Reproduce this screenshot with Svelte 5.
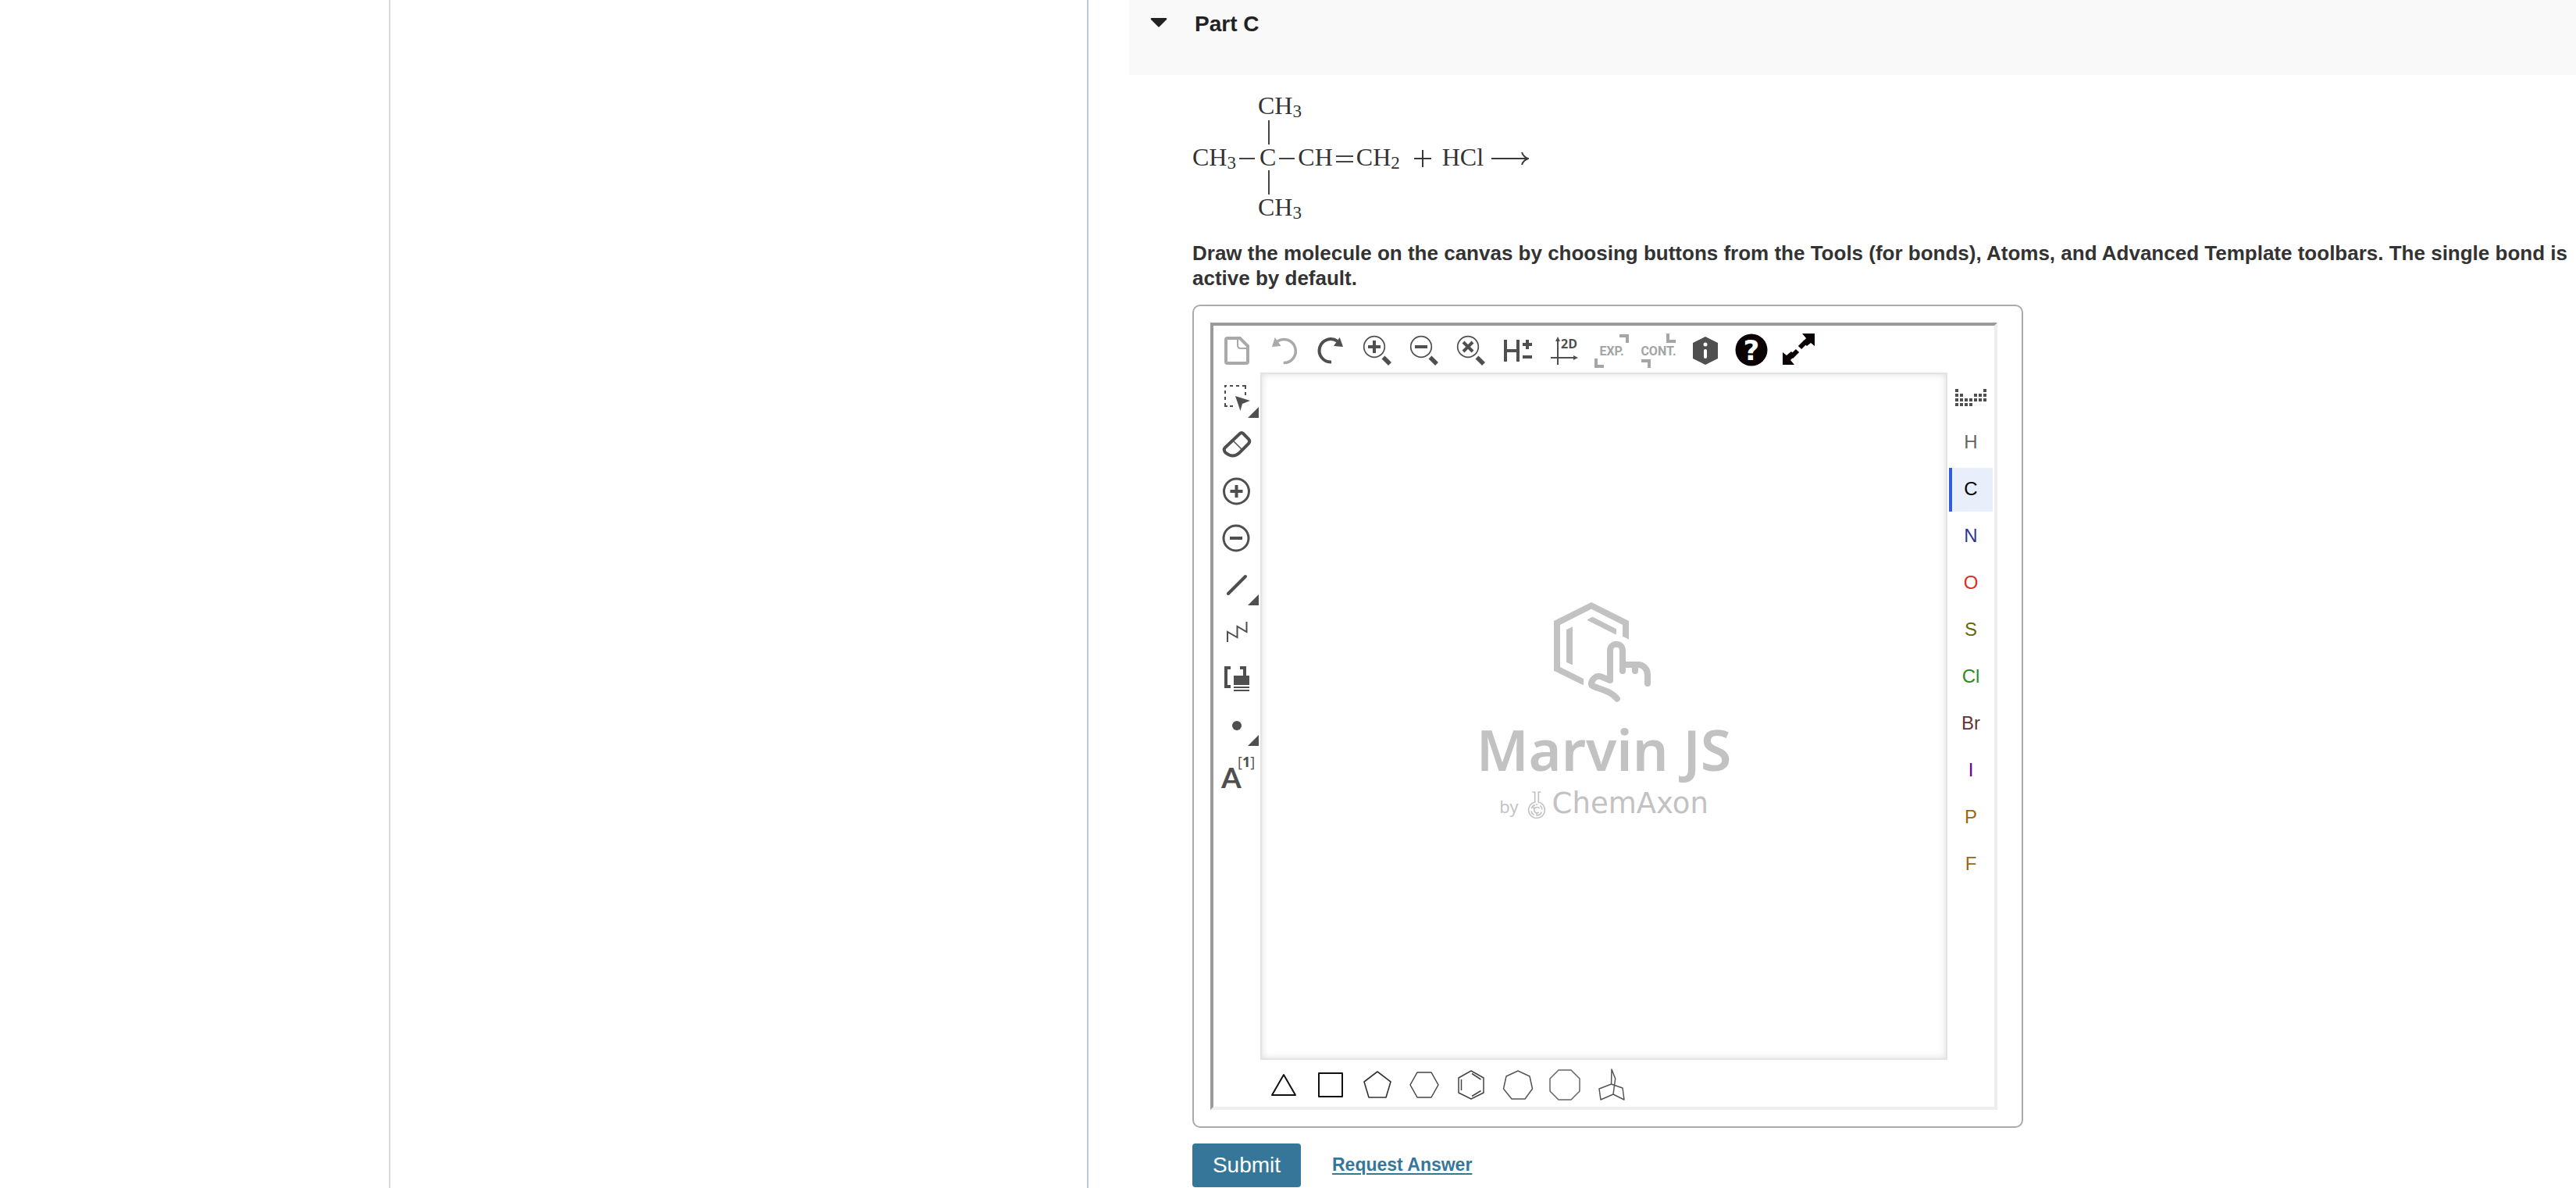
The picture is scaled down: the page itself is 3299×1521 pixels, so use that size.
<script>
  const atoms = [
    { symbol: 'H', color: '#666666' },
    { symbol: 'C', color: '#000000' },
    { symbol: 'N', color: '#303699' },
    { symbol: 'O', color: '#d93025' },
    { symbol: 'S', color: '#66660f' },
    { symbol: 'Cl', color: '#2e8b1f' },
    { symbol: 'Br', color: '#663333' },
    { symbol: 'I', color: '#660099' },
    { symbol: 'P', color: '#996614' },
    { symbol: 'F', color: '#996614' }
  ];
  const tableRows = [[0, 6], [0, 1, 4, 5, 6], [0, 1, 2, 3, 4, 5, 6], [0, 1, 2, 3]];
  const rings = [
    { name: 'Cyclopropane', weight: 2, tone: '#111', d: 'M30 19L45 45H15Z' },
    { name: 'Cyclobutane', weight: 2, tone: '#111', d: 'M15 17H45V47H15Z' },
    { name: 'Cyclopentane', weight: 1.6, tone: '#333', d: 'M30 15L47 28L41 48H19L13 28Z' },
    { name: 'Cyclohexane', weight: 1.5, tone: '#444', d: 'M21 16H39L48 32L39 48H21L12 32Z' },
    { name: 'Benzene', weight: 1.5, tone: '#444', d: 'M30 14L46 23V42L30 50L14 42V23ZM17.500 25V39M31 17.500L42.500 25M42.500 39.500L31 46.500' },
    { name: 'Cycloheptane', weight: 1.5, tone: '#555', d: 'M30 14L45 21L48.500 37L39 50H22L11.500 37L15 21Z' },
    { name: 'Cyclooctane', weight: 1.5, tone: '#666', d: 'M22 13H38L49 24V40L38 51H22L11 40V24Z' },
    { name: 'Bicyclooctane', weight: 1.5, tone: '#555', d: 'M29.500 31L30 12L34.700 24L32 44L46 51L44 36L29.500 31L14 37L16 51L32 44' }
  ];
  let atom = $state('C');
  let open = $state(true);
</script>

<div class="page">
  <aside class="rail"></aside>
  <aside class="side"></aside>
  <main>
    <header>
      <button class="toggle" aria-label="Toggle Part C" aria-expanded={open} onclick={() => (open = !open)}>
        <svg width="22" height="12" viewBox="0 0 22 12"><path d="M2 0H20Q22 0 21 2L12 11Q11 12 10 11L1 2Q0 0 2 0Z" fill="#222" /></svg>
      </button>
      <h2>Part C</h2>
    </header>

    <section class="body">
      <div class="formula">
        <span class="branch">CH<sub>3</sub></span>
        <i class="up"></i>
        <span class="start">CH<sub>3</sub><i class="single"></i></span>
        <span class="chain">
          C<i class="single"></i>CH<i class="double"></i>CH<sub>2</sub>
          <svg class="plus" width="22" height="22" viewBox="0 0 22 22"><path d="M0 11H22M11 0V22" /></svg>
          HCl
          <svg class="arrow" width="48" height="18" viewBox="0 0 48 18"><path d="M0 9H46M39 1Q41 7 47 9Q41 11 39 17" /></svg>
        </span>
        <i class="down"></i>
        <span class="branch low">CH<sub>3</sub></span>
      </div>

      <p class="task">Draw the molecule on the canvas by choosing buttons from the Tools (for bonds), Atoms, and Advanced Template toolbars. The single bond is active by default.</p>

      <div class="editor">
        <div class="frame">
          <div class="top">
            <button class="off" aria-label="New"><svg viewBox="0 0 60 60"><path d="M18 16H34L44 26V46Q44 48 42 48H18Q16 48 16 46V18Q16 16 18 16Z" stroke-width="4" /><path d="M31 16V25Q31 29 35 29H45" stroke-width="2" /></svg></button>
            <button class="off" aria-label="Undo"><svg viewBox="0 0 60 60"><path d="M22 20A15 15 0 1 1 29.700 47.500" stroke-width="3.500" /><path class="solid" d="M18.700 15L15 27L26.500 26Z" /></svg></button>
            <button aria-label="Redo"><svg viewBox="0 0 60 60"><path d="M39 20A14.700 14.700 0 1 0 31 46.500" stroke-width="4" /><path class="solid" d="M41.700 15L46 27L34 26Z" /></svg></button>
            <button aria-label="Zoom in"><svg viewBox="0 0 60 60"><circle cx="26" cy="27" r="13.300" stroke-width="1.700" /><path d="M18 27H34M26 19V35" stroke-width="4" /><path d="M37.500 40.500L46 49" stroke-width="5.500" /></svg></button>
            <button aria-label="Zoom out"><svg viewBox="0 0 60 60"><circle cx="26" cy="27" r="13.300" stroke-width="1.700" /><path d="M18 27H34" stroke-width="4" /><path d="M37.500 40.500L46 49" stroke-width="5.500" /></svg></button>
            <button aria-label="Zoom to fit"><svg viewBox="0 0 60 60"><circle cx="26" cy="27" r="13.300" stroke-width="1.700" /><path d="M20 21L32 33M32 21L20 33" stroke-width="4" /><path d="M37.500 40.500L46 49" stroke-width="5.500" /></svg></button>
            <button aria-label="Hydrogens"><svg viewBox="0 0 60 60"><path d="M14 18V46M30 18V46M14 32H30M36 24H48M42 18V30M36 40H48" stroke-width="4" /></svg></button>
            <button aria-label="Clean in 2D"><svg viewBox="0 0 60 60"><path d="M21 17V50M12 41H44" stroke-width="2" /><path class="solid" d="M21 14L24 20H18ZM47 41L41 44V38Z" /><text x="25" y="29" class="two">2D</text></svg></button>
            <button class="dim" aria-label="Expand groups"><svg viewBox="0 0 60 60"><path d="M40 13H50V22M10 42V52H20" stroke-width="4" /><text x="30" y="38" class="word">EXP.</text></svg></button>
            <button class="dim" aria-label="Contract groups"><svg viewBox="0 0 60 60"><path d="M42 10V20H52M8 45H18V54" stroke-width="4" /><text x="30" y="38" class="word">CONT.</text></svg></button>
            <button aria-label="About"><svg viewBox="0 0 60 60"><path class="solid" d="M30 14L46 22V42L30 50L14 42V22Z" /><circle cx="30" cy="24" r="2.500" class="white" /><path d="M30 32V40" stroke="#fff" stroke-width="4" stroke-linecap="round" /></svg></button>
            <button class="black" aria-label="Help"><svg viewBox="0 0 60 60"><circle class="solid" cx="29" cy="31" r="20.500" /><text x="29" y="44" class="question">?</text></svg></button>
            <button class="black" aria-label="Full screen"><svg viewBox="0 0 60 60"><path class="solid" d="M50 10V26L45 22L40 26L35 21L39 16L34 10ZM9 50V34L14 38L20 33L25 38L19 44L24 50Z" /><path d="M39 20L31 28M28 32L20 40" stroke-width="6" /></svg></button>
          </div>

          <div class="left">
            <button aria-label="Select"><svg viewBox="0 0 60 60"><path d="M15 19V17H17M21 17H25M29 17H33M37 17H41V21M15 23V27M15 31V35M15 39V43H18M21 43H25M41 25V29" stroke-width="2" /><path class="solid" d="M28 30L47 36L37 40L34.500 49ZM58 44V58H44Z" /></svg></button>
            <button aria-label="Erase"><svg viewBox="0 0 60 60"><path d="M34 18Q36 16 38 18L45 25Q47.500 28 45 31L33 43Q25 50 16 43Q12 39 15 36Z" stroke-width="4" /><path d="M26 28L36 38" stroke-width="1.500" /></svg></button>
            <button aria-label="Increase charge"><svg viewBox="0 0 60 60"><circle cx="29.500" cy="32" r="16" stroke-width="3" /><path d="M21.500 32H37.500M29.500 24V40" stroke-width="4" /></svg></button>
            <button aria-label="Decrease charge"><svg viewBox="0 0 60 60"><circle cx="29" cy="32" r="16" stroke-width="3" /><path d="M21 32H37" stroke-width="4" /></svg></button>
            <button aria-label="Single bond"><svg viewBox="0 0 60 60"><path d="M19 43L41 21" stroke-width="4" stroke-linecap="round" /><path class="solid" d="M58 44V58H44Z" /></svg></button>
            <button aria-label="Chain"><svg viewBox="0 0 60 60"><path d="M18 45V32L30.500 39V25L42.500 32V19" stroke-width="2" /></svg></button>
            <button aria-label="Group"><svg viewBox="0 0 60 60"><path d="M22 18H16V42H22M34 18H40V28" stroke-width="4" /><path class="solid" d="M26 28H46V40H26ZM26 42H46V44H26ZM26 46H46V48H26Z" /></svg></button>
            <button aria-label="Radical"><svg viewBox="0 0 60 60"><circle class="solid" cx="30" cy="32" r="6" /><path class="solid" d="M58 44V58H44Z" /></svg></button>
            <button aria-label="Atom label"><svg viewBox="0 0 60 60"><text x="10" y="52" class="letter">A</text><text x="31" y="25" class="index">[<tspan>1</tspan>]</text></svg></button>
          </div>

          <div class="canvas">
            <svg class="mark" width="124" height="128" viewBox="390 93 372 384">
              <path class="fill" d="M534 93L678 165V231Q678 236 674 234L654 224V180L534 119L414 180V342L504 387V407Q504 412 500 410L390 356V165ZM438 199L457 189Q462 187 462 191V329Q462 335 457 332L438 323ZM519 160L535 151Q538 149 542 151L630 196V212Q630 218 625 216L519 163Z" />
              <path class="hand" d="M750 405V372C750 346 730 333 714 333H655M702 333V357M654 357V278A24 24 0 0 0 606 278V393L572 379C552 371 533 392 534 408C535 418 565 422 600 438Q624 452 633 464" />
            </svg>
            <div class="brand">Marvin JS</div>
            <div class="maker">
              <span class="by">by</span>
              <svg width="24" height="36" viewBox="282 813 72 108">
                <path d="M301 816H311V855A31 31 0 1 0 325 855V816H334" stroke-width="5" />
                <path d="M311 866A20 20 0 0 0 298 879M297 889A21 21 0 0 0 308 904M316 906A21 21 0 0 0 337 893M339 883A21 21 0 0 0 331 868M322 864H314M328 879A11 11 0 1 0 326 894M307 874V882M318 898V904" stroke-width="5" />
              </svg>
              <span>ChemAxon</span>
            </div>
          </div>

          <div class="right">
            <button aria-label="Periodic table"><svg viewBox="0 0 60 60">
              {#each tableRows as cols, r}{#each cols as c}<rect class="solid" x={10 + c * 6} y={21 + r * 6} width="4" height="4" />{/each}{/each}
            </svg></button>
            {#each atoms as a}
              <button class:on={atom === a.symbol} style:color={a.color} onclick={() => (atom = a.symbol)}>{a.symbol}</button>
            {/each}
          </div>

          <div class="bottom">
            {#each rings as r}
              <button aria-label={r.name}><svg viewBox="0 0 60 60"><path d={r.d} stroke={r.tone} stroke-width={r.weight} stroke-linejoin="round" /></svg></button>
            {/each}
          </div>
        </div>
      </div>

      <div class="actions">
        <button class="submit">Submit</button>
        <a href="#answer">Request Answer</a>
      </div>
    </section>
  </main>
</div>

<style>
  :global(body) { background: #fff; overflow: hidden; }
  .page {
    display: flex;
    min-height: 100vh;
    box-sizing: border-box;
    font-family: "Liberation Sans", Arial, sans-serif;
    color: #333;
  }
  .rail { flex: 0 0 498px; border-right: 2px solid #d8d8d8; }
  .side { flex: 0 0 892px; border-right: 2px solid #bac9dc; }
  main { flex: 1; min-width: 0; padding-left: 52px; }
  header {
    display: flex;
    align-items: flex-start;
    height: 96px;
    background: #f9f9f9;
  }
  button { font: inherit; border: 0; padding: 0; margin: 0; background: none; cursor: pointer; }
  .toggle { width: 84px; padding: 23px 0 0 27px; text-align: left; line-height: 0; }
  h2 { margin: 0; padding-top: 15px; font-size: 28px; line-height: 32px; color: #222; }
  .body { padding: 22px 0 0 81px; }

  .formula {
    display: grid;
    grid-template-columns: 84px 1fr;
    grid-template-rows: 34px 32px 34px 30px 34px;
    font: 32px/34px "Liberation Serif", "Times New Roman", serif;
  }
  .formula > * { grid-column: 2; }
  .formula sub { font-size: 23px; line-height: 0; vertical-align: -4px; }
  .formula .start { grid-column: 1; display: flex; align-items: baseline; }
  .formula .start sub { position: relative; top: 4px; }
  .chain { display: flex; align-items: baseline; padding-left: 2px; }
  .chain sub { position: relative; top: 4px; }
  .up, .down { width: 2px; height: 31px; margin-left: 13px; background: #444; }
  .up { margin-top: 2px; }
  .single, .double { align-self: center; width: 20px; height: 2px; margin: 4px 4px 0; background: #444; }
  .double { box-sizing: border-box; width: 22px; height: 9px; margin-top: 4px; border: solid #444; border-width: 2px 0; background: none; }
  .plus, .arrow { align-self: center; fill: none; stroke: #3a3a3a; stroke-width: 2; margin-top: 4px; }
  .plus { margin-left: 18px; margin-right: 14px; }
  .arrow { margin-left: 10px; }

  .task { margin: 26px 0 18px; font-size: 26px; line-height: 32px; font-weight: 700; }

  .editor {
    width: fit-content;
    padding: 21px 31px 21px 21px;
    border: 2px solid #aaa;
    border-radius: 10px;
  }
  .frame {
    display: grid;
    grid-template-columns: 60px 880px 60px;
    grid-template-rows: 60px 880px 60px;
    border: 4px solid;
    border-color: #9a9a9a #eee #eee #9a9a9a;
  }
  .top { grid-column: 1 / -1; display: flex; }
  .left, .right { display: flex; flex-direction: column; }
  .bottom { grid-column: 2; display: flex; }
  .frame button { flex: none; width: 60px; height: 60px; color: #4f4f4f; }
  .frame button svg { display: block; width: 60px; height: 60px; fill: none; stroke: currentColor; }
  .frame .off { color: #a9a9a9; }
  .frame .dim { color: #a3a5a6; }
  .frame .black { color: #0a0203; }
  .frame .solid { fill: currentColor; stroke: none; }
  .frame .white { fill: #fff; stroke: none; }
  .frame text { fill: currentColor; stroke: none; }
  .two { font: 700 16px "Open Sans", sans-serif; }
  .word { font: 700 16px Roboto, sans-serif; text-anchor: middle; }
  .frame .question { font: 700 36px "DejaVu Sans", sans-serif; text-anchor: middle; fill: #fff; }
  .letter { font: 700 37px Lato, sans-serif; }
  .index { font: 400 18px "Open Sans", sans-serif; }
  .index tspan { font-weight: 700; }
  .right button:not(:first-child) { box-sizing: border-box; height: 56px; width: 56px; margin: 2px; font-size: 24px; padding-bottom: 3px; }
  .right .on { background: #e8effb; border-left: 4px solid #2f5ddd; padding-right: 4px; }

  .canvas {
    display: flex;
    flex-direction: column;
    align-items: center;
    box-sizing: border-box;
    padding-top: 294px;
    color: #c2c2c2;
    background: #fff;
    box-shadow: inset 0 0 0 2px #e3e3e3, inset 0 0 10px 2px #ddd;
  }
  .mark { display: block; margin-right: 4px; }
  .fill { fill: #c2c2c2; }
  .hand { fill: none; stroke: #c2c2c2; stroke-width: 24; stroke-linecap: round; stroke-linejoin: round; }
  .brand { margin-top: 16px; font: 600 72px/88px "Noto Sans", sans-serif; }
  .maker { display: flex; align-items: baseline; margin-top: 6px; font: 37px/40px "DejaVu Sans", sans-serif; }
  .maker svg { align-self: center; margin: 0 8px 0 11px; fill: none; stroke: #c2c2c2; }
  .by { font: 22px/40px "Open Sans", sans-serif; }

  .actions { display: flex; align-items: center; gap: 40px; margin-top: 20px; }
  .submit { width: 139px; height: 56px; border-radius: 4px; background: #367799; color: #fff; font-size: 28px; }
  .actions a { padding-bottom: 2px; color: #367799; font-size: 23px; font-weight: 700; text-decoration-thickness: 2px; text-underline-offset: 3px; }
</style>
